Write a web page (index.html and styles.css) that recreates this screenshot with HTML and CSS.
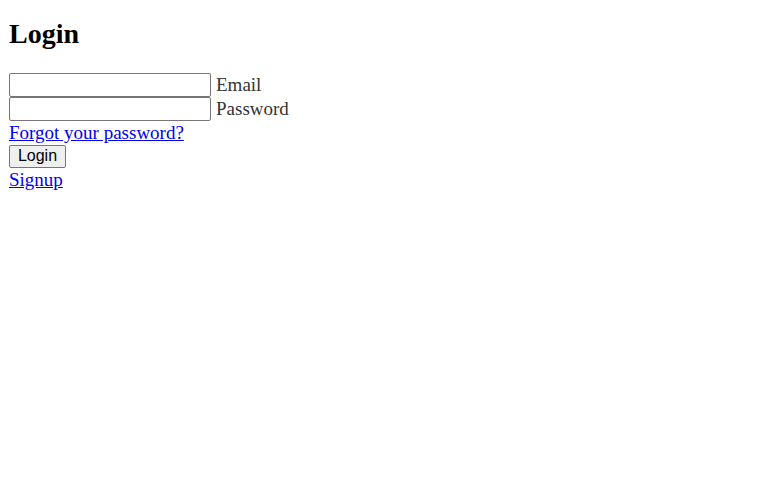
FILE: index.html
```html
<!DOCTYPE html>
<html lang="en">
<head>
<meta charset="utf-8">
<title>Login</title>
<link rel="stylesheet" href="styles.css">
</head>
<body>
<h1 class="title">Login</h1>
<form class="login-form">
  <div class="field"><input class="text-input" type="email" id="email"> <label class="field-label" for="email">Email</label></div>
  <div class="field"><input class="text-input" type="password" id="password"> <label class="field-label" for="password">Password</label></div>
  <a class="link" href="#">Forgot your password?</a>
  <div class="actions"><button class="btn" type="submit">Login</button></div>
  <a class="link" href="#">Signup</a>
</form>
</body>
</html>
```
FILE: styles.css
```css
html, body {
  background: #fff;
}
body {
  margin: 9px;
  font-family: "Liberation Serif", "Times New Roman", serif;
  font-size: 16px;
  color: #000;
}
.title {
  font-size: 28px;
  font-weight: bold;
  margin: 10px 0 24px;
  line-height: 30px;
}
.login-form {
  display: block;
}
.field {
  display: flex;
  align-items: center;
  height: 24px;
}
.text-input {
  box-sizing: border-box;
  width: 202px;
  height: 24px;
  margin: 0;
  padding: 1px 2px;
  border: 1px solid #767676;
  border-radius: 2px;
  font-family: "Liberation Sans", Arial, sans-serif;
  font-size: 13.33px;
  background: #fff;
}
.field-label {
  margin-left: 5px;
  color: #333;
  font-size: 19px;
}
.link {
  display: block;
  color: #0000ee;
  text-decoration: underline;
  font-size: 19px;
  line-height: 23px;
}
.actions {
  height: 24px;
  display: flex;
  align-items: center;
}
.btn {
  box-sizing: border-box;
  height: 23px;
  width: 57px;
  padding: 0 6px;
  margin: 0;
  border: 1px solid #767676;
  border-radius: 2px;
  background: #efefef;
  color: #000;
  font-family: "Liberation Sans", Arial, sans-serif;
  font-size: 16px;
}
```
